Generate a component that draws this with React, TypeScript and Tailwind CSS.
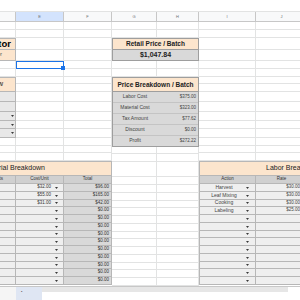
import React from 'react';

const grid = 'border-r border-b border-[#e2e3e3]';
const tbl = 'border-r border-b border-[#b7b7b7]';

const topRows = ['h-[8px]', 'h-[8px]', 'h-[12px]', 'h-[11px]', 'h-[8px]', 'h-[8px]', 'h-[7px]', 'h-[8px]', 'h-[10px]', 'h-[10px]', 'h-[9px]', 'h-[8px]', 'h-[9px]', 'h-[8px]', 'h-[7px]', 'h-[8px]'];
const dataRows = ['h-[8px]', 'h-[8px]', 'h-[7px]', 'h-[8px]', 'h-[8px]', 'h-[8px]', 'h-[7px]', 'h-[8px]', 'h-[8px]', 'h-[8px]', 'h-[7px]', 'h-[8px]', 'h-[8px]'];

const materials = [
  { cost: '$32.00', total: '$96.00' },
  { cost: '$55.00', total: '$165.00' },
  { cost: '$31.00', total: '$42.00' },
];

const labor = [
  { action: 'Harvest', rate: '$30.00' },
  { action: 'Leaf Mixing', rate: '$30.00' },
  { action: 'Cooking', rate: '$30.00' },
  { action: 'Labeling', rate: '$25.00' },
];

const breakdown = [
  { label: 'Labor Cost', value: '$375.00', h: 'h-[11px]' },
  { label: 'Material Cost', value: '$323.00', h: 'h-[11px]' },
  { label: 'Tax Amount', value: '$77.62', h: 'h-[11px]' },
  { label: 'Discount', value: '$0.00', h: 'h-[11px]' },
  { label: 'Profit', value: '$272.22', h: 'h-[10px]' },
];

function Arrow() {
  return (
    <svg width="3" height="2" viewBox="0 0 6 4" className="shrink-0">
      <path d="M0 0h6L3 4z" fill="#3c3c3c" />
    </svg>
  );
}

function Plain({ h, widths }: { h: string; widths: string[] }) {
  return (
    <div className={`flex ${h}`}>
      {widths.map((w, i) => (
        <div key={i} className={`${w} ${grid} shrink-0`} />
      ))}
    </div>
  );
}

export default function App() {
  return (
    <div className="w-[300px] h-[300px] overflow-hidden bg-white font-['Liberation_Sans',Arial,sans-serif] text-[#222]">
      {/* toolbar edge */}
      <div className="h-[12px] bg-white border-b border-[#e2e3e3]" />

      {/* column letters */}
      <div className="flex h-[10px] text-[4px] text-[#6b6f73] bg-[#f8f9fa]">
        <div className="w-[16px] shrink-0 border-r border-b border-[#c7c7c7]" />
        <div className="w-[48px] shrink-0 flex items-center justify-center bg-[#d3e3fd] border-r border-b border-[#c7c7c7]">E</div>
        <div className="w-[48px] shrink-0 flex items-center justify-center border-r border-b border-[#c7c7c7]">F</div>
        <div className="w-[45px] shrink-0 flex items-center justify-center border-r border-b border-[#c7c7c7]">G</div>
        <div className="w-[42px] shrink-0 flex items-center justify-center border-r border-b border-[#c7c7c7]">H</div>
        <div className="w-[57px] shrink-0 flex items-center justify-center border-r border-b border-[#c7c7c7]">I</div>
        <div className="w-[52px] shrink-0 flex items-center justify-center border-r border-b border-[#c7c7c7]">J</div>
      </div>

      <div className="flex">
        {/* D..F */}
        <div className="w-[112px] shrink-0 flex flex-col">
          <div className="flex">
            <div className="w-[16px] flex flex-col">
              <div className={`h-[8px] ${grid}`} />
              <div className={`h-[8px] ${grid}`} />
              <div className={`h-[12px] bg-[#fce5cd] ${tbl} border-t flex items-center justify-end overflow-hidden pr-[4px]`}>
                <span className="text-[9.5px] font-bold whitespace-nowrap text-black">Calculator</span>
              </div>
              <div className={`h-[11px] bg-[#fce5cd] ${tbl} flex items-center justify-end overflow-hidden pr-[13px]`}>
                <span className="text-[5px] whitespace-nowrap text-[#444]">for every Maker</span>
              </div>
              <div className={`h-[8px] ${grid}`} />
              <div className={`h-[8px] ${grid}`} />
              <div className={`h-[15px] bg-[#fce5cd] ${tbl} border-t flex items-center justify-end overflow-hidden pr-[12px]`}>
                <span className="text-[7px] whitespace-nowrap">Overview</span>
              </div>
              {topRows.slice(8, 13).map((h, i) => (
                <div key={i} className={`${h} bg-[#e8e8e8] ${tbl} flex items-center justify-end pr-[1px]`}>
                  {i >= 2 && <Arrow />}
                </div>
              ))}
              {topRows.slice(13).map((h, i) => (
                <div key={i} className={`${h} ${grid}`} />
              ))}
            </div>
            <div className="w-[48px] flex flex-col">
              {topRows.map((h, i) =>
                i === 4 ? (
                  <div key={i} className={`${h} relative border border-[#1a73e8]`}>
                    <div className="absolute -right-[2px] -bottom-[2px] w-[4px] h-[4px] bg-[#1a73e8]" />
                  </div>
                ) : (
                  <div key={i} className={`${h} ${grid}`} />
                )
              )}
            </div>
            <div className="w-[48px] flex flex-col">
              {topRows.map((h, i) => (
                <div key={i} className={`${h} ${grid}`} />
              ))}
            </div>
          </div>

          {/* Material Breakdown */}
          <div className={`h-[15px] bg-[#fce5cd] ${tbl} border-t flex items-center justify-end overflow-hidden pr-[66px]`}>
            <span className="text-[7px] whitespace-nowrap">Material Breakdown</span>
          </div>
          <div className="flex h-[8px] bg-[#d0d0d0] text-[4.5px] text-[#333]">
            <div className={`w-[16px] ${tbl} flex items-center justify-end overflow-hidden pr-[12px]`}>
              <span className="whitespace-nowrap">Units</span>
            </div>
            <div className={`w-[48px] ${tbl} flex items-center justify-center`}>Cost/Unit</div>
            <div className={`w-[48px] ${tbl} flex items-center justify-center`}>Total</div>
          </div>
          {dataRows.map((h, i) => {
            const m = materials[i];
            return (
              <div key={i} className={`flex ${h} text-[4.5px] text-[#333]`}>
                <div className={`w-[16px] bg-[#efefef] ${tbl}`} />
                <div className={`w-[48px] bg-[#efefef] ${tbl} flex items-center justify-end gap-[4px] pr-[5px]`}>
                  {m && <span>{m.cost}</span>}
                  <Arrow />
                </div>
                <div className={`w-[48px] bg-[#d9d9d9] ${tbl} flex items-center justify-end pr-[2px]`}>
                  {m ? m.total : '$0.00'}
                </div>
              </div>
            );
          })}
        </div>

        {/* G..H */}
        <div className="w-[87px] shrink-0 flex flex-col">
          <Plain h="h-[8px]" widths={['w-[45px]', 'w-[42px]']} />
          <Plain h="h-[8px]" widths={['w-[45px]', 'w-[42px]']} />
          <div className="h-[12px] bg-[#fce5cd] border border-[#9e9e9e] flex items-center justify-center text-[6.5px] font-bold whitespace-nowrap">
            Retail Price / Batch
          </div>
          <div className="h-[11px] bg-[#d9d9d9] border-x border-b border-[#9e9e9e] flex items-center justify-center text-[7px] font-bold">
            $1,047.84
          </div>
          <Plain h="h-[8px]" widths={['w-[45px]', 'w-[42px]']} />
          <Plain h="h-[8px]" widths={['w-[45px]', 'w-[42px]']} />
          <div className="h-[15px] bg-[#fce5cd] border border-[#9e9e9e] flex items-center justify-center text-[6.5px] font-bold whitespace-nowrap">
            Price Breakdown / Batch
          </div>
          <div className="border-x border-b border-[#9e9e9e] bg-[#d9d9d9] text-[#444]">
            {breakdown.map((r, i) => (
              <div key={r.label} className={`flex ${r.h} ${i < 4 ? 'border-b border-[#c4c4c4]' : ''}`}>
                <div className="w-[44px] flex items-center justify-center text-[5px] whitespace-nowrap">{r.label}</div>
                <div className="flex-1 flex items-center justify-end pr-[2px] text-[4.5px]">{r.value}</div>
              </div>
            ))}
          </div>
          <Plain h="h-[7px]" widths={['w-[45px]', 'w-[42px]']} />
          <Plain h="h-[8px]" widths={['w-[45px]', 'w-[42px]']} />
          <Plain h="h-[15px]" widths={['w-[45px]', 'w-[42px]']} />
          <Plain h="h-[8px]" widths={['w-[45px]', 'w-[42px]']} />
          {dataRows.map((h, i) => (
            <Plain key={i} h={h} widths={['w-[45px]', 'w-[42px]']} />
          ))}
        </div>

        {/* I..J */}
        <div className="w-[109px] shrink-0 flex flex-col">
          {topRows.map((h, i) => (
            <Plain key={i} h={h} widths={['w-[57px]', 'w-[52px]']} />
          ))}
          <div className={`h-[15px] bg-[#fce5cd] ${tbl} border-t border-l flex items-center overflow-hidden pl-[66px]`}>
            <span className="text-[7px] whitespace-nowrap">Labor Breakdown</span>
          </div>
          <div className="flex h-[8px] bg-[#d0d0d0] text-[4.5px] text-[#333]">
            <div className={`w-[57px] ${tbl} border-l flex items-center justify-center`}>Action</div>
            <div className={`w-[52px] ${tbl} flex items-center justify-center`}>Rate</div>
          </div>
          {dataRows.map((h, i) => {
            const l = labor[i];
            return (
              <div key={i} className={`flex ${h} text-[#444]`}>
                <div className={`w-[57px] bg-[#efefef] ${tbl} border-l flex items-center pr-[6px] pl-[2px]`}>
                  <span className="flex-1 text-center text-[5px] whitespace-nowrap">{l ? l.action : ''}</span>
                  <Arrow />
                </div>
                <div className={`w-[52px] bg-[#efefef] ${tbl} flex items-center justify-end pr-[7px] text-[4.5px]`}>
                  {l ? l.rate : ''}
                </div>
              </div>
            );
          })}
        </div>
      </div>

      {/* sheet tabs bar */}
      <div className="flex h-[15px] border-t border-[#c7c7c7]">
        <div className="w-[16px] bg-[#f5f5f5]" />
        <div className="w-[26px] bg-[#dfe6f3] flex items-start pl-[5px] pt-[2px] text-[4px] text-[#555]">•</div>
        <div className="flex-1 flex flex-col">
          <div className="h-[5px] bg-[#e6e6e6] mr-[12px]" />
          <div className="flex-1 bg-white" />
        </div>
      </div>
    </div>
  );
}
